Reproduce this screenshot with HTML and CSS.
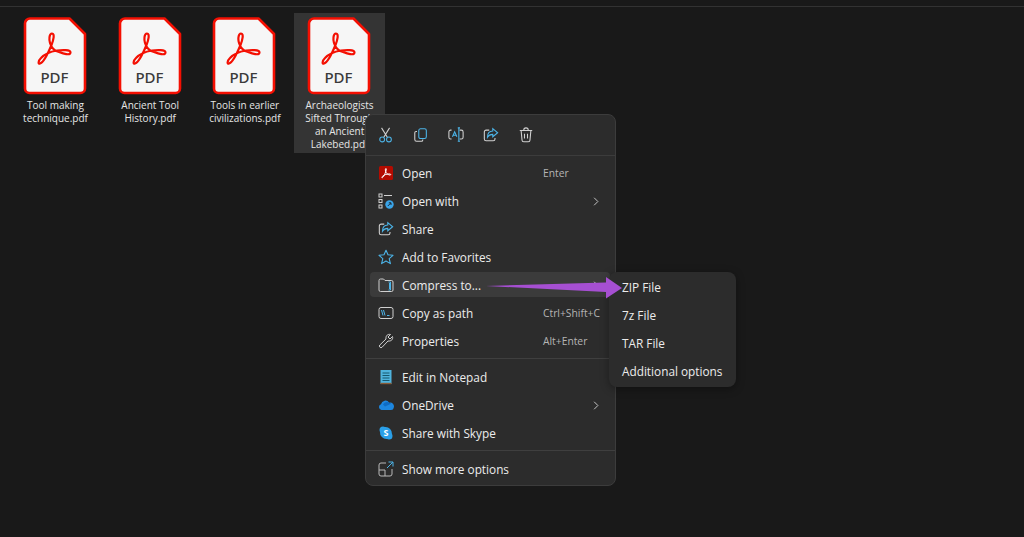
FILE: index.html
```html
<!DOCTYPE html>
<html lang="en">
<head>
<meta charset="utf-8">
<title>Compress to ZIP</title>
<link rel="stylesheet" href="styles.css">
</head>
<body>
<svg class="defs" width="0" height="0" aria-hidden="true">
  <defs>
    <g id="pdf">
      <path d="M7 1.500H46.500L62 17V71.500a4.500 4.500 0 0 1-4.500 4.500H6.500A4.500 4.500 0 0 1 2 71.500V6.500A5 5 0 0 1 7 1.500Z" fill="#f6f6f6" stroke="#f40f02" stroke-width="2.600" stroke-linejoin="round"/>
      <path d="M29 16.500C26 16.500 26 23 27 26C28.500 31 32 34 36 35C40 36.500 47.500 39 47.500 35.500C47.500 32.500 39 33 34 33.500C28 34.500 22 36.500 18 41C15 44 15 47.500 17 46.500C21 45.500 26 34 28.500 28C30.500 23 32 16.500 29 16.500Z" fill="none" stroke="#f40f02" stroke-width="2.200"/>
      <text x="31.500" y="66" text-anchor="middle" class="pdf-text">PDF</text>
    </g>
  </defs>
</svg>
<header class="topbar"></header>
<main class="files">
  <div class="file"><svg class="file-icon" viewBox="0 0 64 78"><use href="#pdf"/></svg><span class="file-name">Tool making technique.pdf</span></div>
  <div class="file"><svg class="file-icon" viewBox="0 0 64 78"><use href="#pdf"/></svg><span class="file-name">Ancient Tool History.pdf</span></div>
  <div class="file"><svg class="file-icon" viewBox="0 0 64 78"><use href="#pdf"/></svg><span class="file-name">Tools in earlier civilizations.pdf</span></div>
  <div class="file selected"><svg class="file-icon" viewBox="0 0 64 78"><use href="#pdf"/></svg><span class="file-name">Archaeologists Sifted Through an Ancient Lakebed.pdf</span></div>
</main>

<nav class="menu">
  <div class="toolbar">
    <svg class="tool" viewBox="0 0 18 18" fill="none" stroke-width="1.200"><path d="M4 1 10.500 11.500M13 1 6.500 11.500" stroke="#d0d0d0"/><circle cx="4.700" cy="14" r="2.700" stroke="#4cb4e8"/><circle cx="12.300" cy="14" r="2.700" stroke="#4cb4e8"/></svg>
    <svg class="tool" viewBox="0 0 18 18" fill="none" stroke-width="1.200"><path d="M4.500 5H3.500A1.500 1.500 0 0 0 2 6.500V14A2 2 0 0 0 4 16H9.500A1.500 1.500 0 0 0 11 14.500V14" stroke="#d0d0d0"/><rect x="6.500" y="2" width="8.500" height="11" rx="2" stroke="#4cb4e8"/></svg>
    <svg class="tool" viewBox="0 0 18 18" fill="none" stroke-width="1.200"><path d="M4 3.500H3A2 2 0 0 0 1 5.500V11.500A2 2 0 0 0 3 13.500H4M13 3.500H15A2 2 0 0 1 17 5.500V11.500A2 2 0 0 1 15 13.500H13" stroke="#d0d0d0"/><path d="M11 1H13.500M12.200 1V16M11 16H13.500" stroke="#4cb4e8"/><path d="M5 11 7.500 5.500 10 11M5.800 9.200H9.200" stroke="#4cb4e8"/></svg>
    <svg class="tool" viewBox="0 0 18 18" fill="none" stroke-width="1.200"><path d="M7 3.500H3.500A2 2 0 0 0 1.500 5.500V13.500A2 2 0 0 0 3.500 15.500H11.500A2 2 0 0 0 13.500 13.500V12.500" stroke="#d0d0d0"/><path d="M11 1.800 16.500 6.500 11 11V8.300C8 8.300 6.300 9.300 5 11.500C5 7.500 7.500 4.800 11 4.600Z" stroke="#4cb4e8"/></svg>
    <svg class="tool" viewBox="0 0 18 18" fill="none" stroke="#d0d0d0" stroke-width="1.200"><path d="M2 4H16M6.500 3.500A2.500 2.500 0 0 1 11.500 3.500M3.500 4 4.500 14.500A2 2 0 0 0 6.500 16.500H11.500A2 2 0 0 0 13.500 14.500L14.500 4M7.300 7.500V13M10.700 7.500V13"/></svg>
  </div>

  <ul class="list">
    <li class="item">
      <svg class="ico" viewBox="0 0 16 16"><rect x="1" y="1" width="14" height="14" rx="1.500" fill="#b30b00"/><path d="M8 3.500C7 3.500 7.200 5.800 8 7.300C8.800 8.800 10 9.500 11.500 10C13 10.300 13.200 9.200 12 9C9.500 8.800 6 9.500 4.300 11.500C3.200 13 4.300 13.200 5.200 12C6.500 10.300 9.300 3.500 8 3.500Z" fill="none" stroke="#fff" stroke-width="1"/></svg>
      <span class="label">Open</span><span class="keys">Enter</span>
    </li>
    <li class="item">
      <svg class="ico" viewBox="0 0 16 16" fill="none" stroke="#d0d0d0" stroke-width="1"><rect x="1" y="1" width="3" height="3"/><rect x="1" y="6.500" width="3" height="3"/><rect x="1" y="12" width="3" height="3"/><path d="M6 2.500H14"/><circle cx="11.500" cy="11.500" r="4.200" fill="#3aa4e8" stroke="none"/><path d="M9.800 13 12.800 10M10.800 9.800H13V12" stroke="#1c2a36"/></svg>
      <span class="label">Open with</span><svg class="chev" viewBox="0 0 8 12"><path d="M1.500 1 6.500 6 1.500 11" fill="none" stroke="#c8c8c8" stroke-width="1.300"/></svg>
    </li>
    <li class="item">
      <svg class="ico" viewBox="0 0 18 18" fill="none" stroke-width="1.200"><path d="M7 3.500H3.500A2 2 0 0 0 1.500 5.500V13.500A2 2 0 0 0 3.500 15.500H11.500A2 2 0 0 0 13.500 13.500V12.500" stroke="#d0d0d0"/><path d="M11 1.800 16.500 6.500 11 11V8.300C8 8.300 6.300 9.300 5 11.500C5 7.500 7.500 4.800 11 4.600Z" stroke="#4cb4e8"/></svg>
      <span class="label">Share</span>
    </li>
    <li class="item">
      <svg class="ico" viewBox="0 0 16 16"><path d="M8 1.200 10 5.800 15 6.300 11.200 9.600 12.400 14.600 8 12 3.600 14.600 4.800 9.600 1 6.300 6 5.800Z" fill="none" stroke="#4cb4e8" stroke-width="1.100" stroke-linejoin="round"/></svg>
      <span class="label">Add to Favorites</span>
    </li>
    <li class="item hover">
      <svg class="ico" viewBox="0 0 16 16" fill="none" stroke-width="1"><path d="M1 4V13A1.500 1.500 0 0 0 2.500 14.500H13.500A1.500 1.500 0 0 0 15 13V5A1.500 1.500 0 0 0 13.500 3.500H7L5.500 2H2.500A1.500 1.500 0 0 0 1 3.500Z" stroke="#d0d0d0"/><path d="M10.500 5H12.500V13H10.500M11.500 6V12" stroke="#4cb4e8"/></svg>
      <span class="label">Compress to...</span><svg class="chev" viewBox="0 0 8 12"><path d="M1.500 1 6.500 6 1.500 11" fill="none" stroke="#c8c8c8" stroke-width="1.300"/></svg>
    </li>
    <li class="item">
      <svg class="ico" viewBox="0 0 16 16" fill="none" stroke-width="1"><rect x="1" y="2.500" width="14" height="11" rx="2" stroke="#d0d0d0"/><path d="M3.500 5 5 10.500M5.500 5 7 10.500M9 10.500H11.500" stroke="#4cb4e8"/></svg>
      <span class="label">Copy as path</span><span class="keys">Ctrl+Shift+C</span>
    </li>
    <li class="item">
      <svg class="ico" viewBox="0 0 16 16" fill="none" stroke="#d0d0d0" stroke-width="1"><path d="M14.500 3.500 12 6 10 4 12.500 1.500C10 .8 7.500 2.500 8 6L1.800 12A1.600 1.600 0 0 0 4 14.300L10 8C13.500 8.500 15.300 6 14.500 3.500Z" stroke-linejoin="round"/></svg>
      <span class="label">Properties</span><span class="keys">Alt+Enter</span>
    </li>
  </ul>
  <hr class="sep">
  <ul class="list">
    <li class="item">
      <svg class="ico" viewBox="0 0 16 16"><rect x="2.500" y="1" width="11" height="14" fill="#4fb3dd"/><rect x="2.500" y="13.800" width="11" height="1.400" fill="#8a5a35"/><path d="M4.500 4H11.500M4.500 6.500H11.500M4.500 9H11.500M4.500 11.500H11.500" stroke="#17586f" stroke-width="1"/></svg>
      <span class="label">Edit in Notepad</span>
    </li>
    <li class="item">
      <svg class="ico" viewBox="0 0 16 16"><path d="M3.500 13A3 3 0 0 1 3 7.200 4.500 4.500 0 0 1 11.200 5.700 3.800 3.800 0 0 1 15.800 10.500 2.800 2.800 0 0 1 13 13Z" fill="#1d87e0"/><path d="M5 7.500A4.500 4.500 0 0 1 11.200 5.700 3.800 3.800 0 0 1 13 6.700L7 9.500Z" fill="#0f6cc4"/></svg>
      <span class="label">OneDrive</span><svg class="chev" viewBox="0 0 8 12"><path d="M1.500 1 6.500 6 1.500 11" fill="none" stroke="#c8c8c8" stroke-width="1.300"/></svg>
    </li>
    <li class="item">
      <svg class="ico" viewBox="0 0 16 16"><path d="M5 1.500A3.500 3.500 0 0 0 1.500 5C1.500 5.800 1.800 6.500 2 7A6.500 6.500 0 0 0 9 14C9.500 14.300 10.200 14.500 11 14.500A3.500 3.500 0 0 0 14.500 11C14.500 10.300 14.300 9.600 14 9A6.500 6.500 0 0 0 7 2C6.500 1.700 5.800 1.500 5 1.500Z" fill="#2a9fe8"/><text x="8" y="11.300" text-anchor="middle" class="skype">S</text></svg>
      <span class="label">Share with Skype</span>
    </li>
  </ul>
  <hr class="sep">
  <div class="item more">
    <svg class="ico" viewBox="0 0 16 16" fill="none" stroke-width="1"><path d="M8 2H3A2 2 0 0 0 1 4V13A2 2 0 0 0 3 15H12A2 2 0 0 0 14 13V8M1 9H7V15" stroke="#b8b8b8"/><path d="M9 7 14.800 1.200M10.500 1H15V5.500" stroke="#4cb4e8"/></svg>
    <span class="label">Show more options</span>
  </div>
</nav>

<aside class="submenu">
  <div class="sub-item">ZIP File</div>
  <div class="sub-item">7z File</div>
  <div class="sub-item">TAR File</div>
  <div class="sub-item">Additional options</div>
</aside>

<svg class="arrow" viewBox="0 0 138 24" aria-hidden="true"><path d="M0 9 120 5.500 120 0 136 11 120 21.500 120 15Z" fill="#a64fd2"/></svg>
</body>
</html>
```

FILE: styles.css
```css
* { box-sizing: border-box; }
html, body { height: 100%; }
body {
  margin: 0;
  overflow: hidden;
  background: #191919;
  color: #f0f0f0;
  font-family: "Open Sans", "Noto Sans", sans-serif;
  position: relative;
}
.defs { position: absolute; }
.topbar { height: 7px; border-bottom: 1px solid #323232; }
.files {
  display: flex;
  gap: 3.700px;
  padding: 6px 0 0 10px;
  align-items: flex-start;
}
.file {
  width: 91px;
  height: 140px;
  padding: 4px 6px 0;
  display: flex;
  flex-direction: column;
  align-items: center;
}
.file.selected { background: #343434; }
.file-icon { width: 64px; height: 78px; flex: none; margin-left: -1px; }
.pdf-text {
  font-family: "Noto Sans", sans-serif;
  font-size: 15px;
  font-weight: 500;
  fill: #3a3a3a;
}
.file-name {
  margin-top: 4px;
  font-size: 10px;
  line-height: 13px;
  text-align: center;
  color: #e6e6e6;
}
.menu {
  position: absolute;
  left: 365px;
  top: 114px;
  width: 251px;
  height: 372px;
  background: #2c2c2c;
  border: 1px solid #3c3c3c;
  border-radius: 8px;
  display: flex;
  flex-direction: column;
}
.toolbar {
  height: 41px;
  flex: none;
  display: flex;
  align-items: center;
  gap: 19px;
  padding-left: 11.500px;
  border-bottom: 1px solid #3c3c3c;
}
.tool { width: 16px; height: 16px; flex: none; }
.list { list-style: none; margin: 0; padding: 0; }
.list:first-of-type { padding-top: 3px; }
.item {
  height: 28px;
  display: flex;
  align-items: center;
  padding-left: 12px;
  position: relative;
  font-size: 11.800px;
  color: #ececec;
}
.item.hover::before {
  content: "";
  position: absolute;
  left: 4px;
  right: 5px;
  top: 1px;
  bottom: 2px;
  background: #3b3b3b;
  border-radius: 4px;
}
.ico { width: 16px; height: 16px; flex: none; position: relative; }
.label { margin-left: 8px; position: relative; flex: 1; }
.keys {
  position: absolute;
  left: 177px;
  font-size: 10.300px;
  color: #b4b4b4;
}
.chev {
  position: absolute;
  left: 227px;
  width: 6px;
  height: 9px;
}
.sep {
  margin: 3px 0 4px;
  border: 0;
  border-top: 1px solid #3f3f3f;
}
.skype {
  font-family: "Open Sans", sans-serif;
  font-size: 9px;
  font-weight: 700;
  fill: #fff;
}
.submenu {
  position: absolute;
  left: 609px;
  top: 272px;
  width: 127px;
  height: 115px;
  padding-top: 1px;
  background: #2c2c2c;
  border-radius: 8px;
  box-shadow: 0 2px 8px rgba(0, 0, 0, .35);
}
.sub-item {
  height: 28px;
  line-height: 28px;
  padding-left: 13px;
  font-size: 11.800px;
  color: #ececec;
}
.arrow {
  position: absolute;
  left: 486px;
  top: 277px;
  width: 138px;
  height: 24px;
}
```
